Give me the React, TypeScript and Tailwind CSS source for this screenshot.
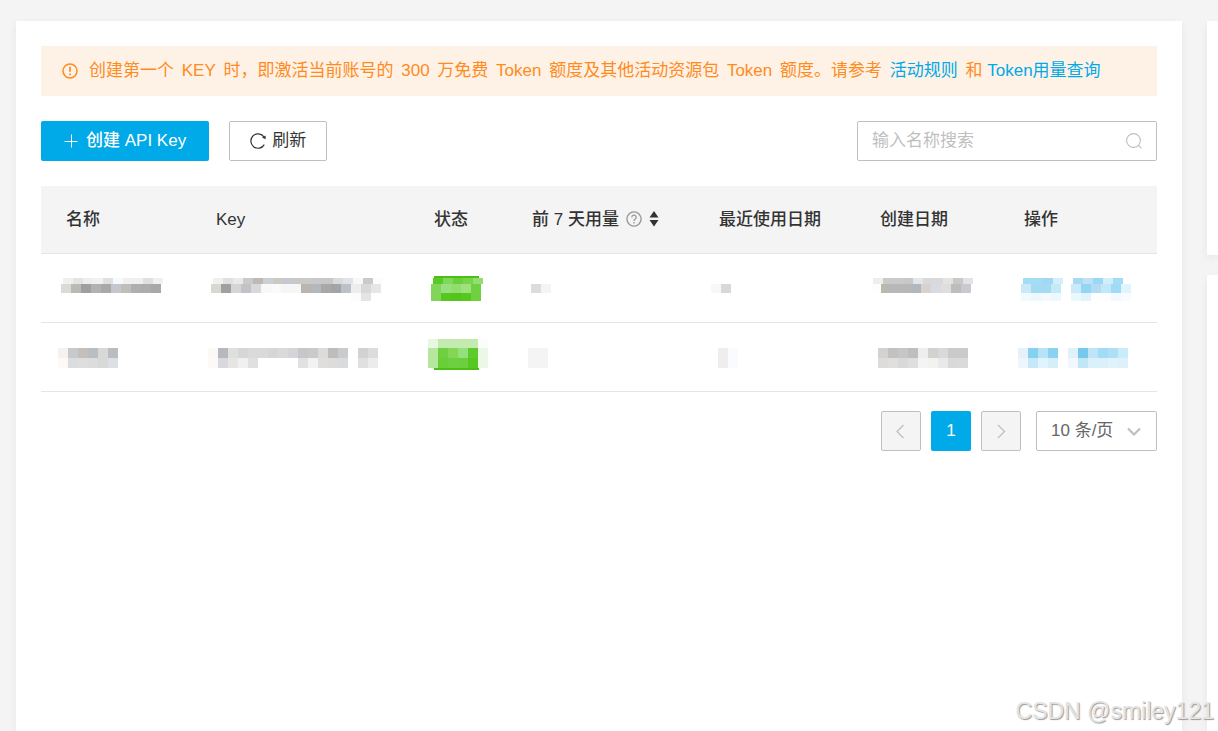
import { useState } from "react";

type Strip = { x: number; y: number; h: number; colors: string[] };

const columns = [
  { key: "name", title: "名称", width: "w-[150px]" },
  { key: "key", title: "Key", width: "w-[218px]" },
  { key: "status", title: "状态", width: "w-[98px]" },
  { key: "usage", title: "前 7 天用量", width: "w-[187px]" },
  { key: "lastUsed", title: "最近使用日期", width: "w-[161px]" },
  { key: "created", title: "创建日期", width: "w-[144px]" },
  { key: "actions", title: "操作", width: "w-auto" },
];

const strip = (x: number, y: number, h: number, colors: string): Strip => ({
  x,
  y,
  h,
  colors: colors.split(" "),
});

// every row holds one masked value per column
const rows: Strip[][][] = [
  [
    [
      strip(6, 10, 6, "f0f0ef e4e4e4 edeef0 f2f1ef e0e0e1 f6faff f0f0f0 f0f0f0 e0e0e0 f0f0f0"),
      strip(4, 16, 9, "dadada bcb8b4 9f9fa0 aeb3b4 a9a9a9 c4c8cc bfbebc aeafb2 acaeae a8a8a8"),
    ],
    [
      strip(6, 10, 6, "f0f0f0 e0e0e0 ebeae8 cacaca bcb9b7 cbd0d3 ccc8c4 c5c8d1 ccc8c6 cacaca c8c8c8 c8c8c8 d9dadc e1e4e7 f8f8f8 cacaca fcfcfc"),
      strip(4, 16, 9, "dad6d2 a0a0a0 d3d5d8 c2c3c6 d9d9d9 f8f8f8 fafafa f6f6f6 f6f6f4 b9b5af b5b8bb a8a8a8 a4a4a6 bbc1cb ededed d9d9dc e6e6e6"),
      strip(144, 25, 8, "fcfcfc e4e4e4"),
    ],
    [
      strip(9, 8, 2, "4bc013 4bc013 4bc013 4bc013"),
      strip(44, 8, 2, "4bc013"),
      strip(8, 10, 6, "57ca26 80d75a 6acf3c 77d44c 93dd73"),
      strip(6, 16, 9, "81d659 97e07f 92dd70 9fe17f 6fd040"),
      strip(6, 25, 8, "81d659 56c71d 52c51a 56c71d 6fd040"),
    ],
    [strip(8, 16, 9, "dddcda f3f4f6")],
    [strip(1, 16, 9, "f8f8f7 d6d8da")],
    [
      strip(2, 10, 6, "efeeec cacaca cacaca c8c8c8 e3e6e8 d9d9d9 d9d9d9 e6e4e2 c9c9c9 e1e3e6"),
      strip(0, 16, 9, "fefdfb bbb8b2 b5b9bd bbb7b5 b1b7ba d8d1d2 d6dce2 e0ddda bdbdbd c9cad0"),
    ],
    [
      strip(8, 10, 6, "a3dcf3 a3dcf3 a0d9f1 d6eefb"),
      strip(58, 10, 6, "a8d9f2 bde2f5 99d9f3 d2eefb a3dcf5"),
      strip(6, 16, 9, "c9e9f6 a3dbf3 a3dbf3 c2ebf7"),
      strip(56, 16, 9, "cbe9f8 93d6f2 b5daf5 bfe8f9 a0daf4 dff5fd"),
      strip(6, 25, 8, "f2fafe edf8fd f2fafe edf8fe"),
      strip(56, 25, 8, "eaf7fd e1f4fd fefefe fcfdfe f3f9fe f9fcff"),
    ],
  ],
  [
    [
      strip(1, 11, 10, "f7f2ee c8c9cb c3bfbb b9bec2 d8d8d8 b9bcc3"),
      strip(1, 21, 10, "fbfaf7 dbdcde dededc dcdcdc d8d8d8 dedfe3"),
    ],
    [
      strip(1, 11, 10, "fcf8f4 b6b8bd dee0de d6d6d6 dadada dbdad8 d5d6d9 dcdad9 d3d5d8 c7c7c7 c9cbcb dbdbdb bebdbc cacbcd"),
      strip(151, 11, 10, "d2d2d2 dcdcdc"),
      strip(1, 21, 10, "fbfaf9 d7d9dc e6e5e3 f0f0f0 e0e0e0"),
      strip(91, 21, 10, "e1e1e1 f2f2f2 dfdedc dddcdc dadbdc"),
      strip(151, 21, 10, "e0e0e0 ececec"),
    ],
    [
      strip(3, 2, 9, "e7f7e0 c4ebaf c4ebaf c4ebaf c4ebaf fafdf9"),
      strip(3, 11, 10, "b7e79f 6ed040 84d755 95df7d 5fca2c ebf8e6"),
      strip(3, 21, 10, "b7e79f 69cf37 6ed040 6ccf3e 57c81f ebf8e6"),
      strip(9, 31, 2, "4bc013 4bc013 4bc013 4bc013"),
      strip(44, 31, 2, "4bc013"),
    ],
    [strip(5, 11, 20, "f4f4f4 f4f4f4")],
    [strip(8, 11, 20, "efeeec fafbfe")],
    [
      strip(7, 11, 10, "d5d1ce c3c1bf c5c6ca bebebe eeeeee d2d2d0 d9d9dc cacaca cacaca"),
      strip(7, 21, 10, "dddcda dfdfdf d9d9d9 dedede f3f5f5 f2f2f0 e9e9e9 d9d9d9 dadada"),
    ],
    [
      strip(13, 2, 9, "fafdff"),
      strip(63, 2, 9, "fcfdff"),
      strip(3, 11, 10, "e6f2fb 87d1f0 b6e3f5 88d3f1"),
      strip(53, 11, 10, "e1f1fb 78c8ee bee5f6 a2dbf5 aedff5 c8ecf9"),
      strip(3, 21, 10, "ecf6fc c6e8f9 e0f4fd d5eefa"),
      strip(53, 21, 10, "f0f8fd c1e6f6 daf0fb daf0fb e0f2fb def1fb"),
    ],
  ],
];

const Mosaic = ({ strips }: { strips: Strip[] }) => (
  <svg className="block h-10 w-full overflow-visible" shapeRendering="crispEdges" aria-hidden="true">
    {strips.map((s, i) =>
      s.colors.map((color, j) => (
        <rect key={`${i}-${j}`} x={s.x + j * 10} y={s.y} width={10} height={s.h} fill={`#${color}`} />
      ))
    )}
  </svg>
);

const WarningIcon = () => (
  <svg width="16" height="16" viewBox="0 0 16 16" fill="none" stroke="currentColor" className="shrink-0">
    <circle cx="8" cy="8" r="7" strokeWidth="1.5" />
    <path d="M8 3.8v5M8 10.4v1.8" strokeWidth="1.7" />
  </svg>
);

const PlusIcon = () => (
  <svg width="14" height="14" viewBox="0 0 14 14" fill="none" stroke="currentColor">
    <path d="M0.5 7.5h13M7.5 0.5v13" />
  </svg>
);

const RefreshIcon = () => (
  <svg width="16" height="16" viewBox="0 0 16 16" fill="none" stroke="currentColor">
    <path d="M14.3 11.6A7.2 7.2 0 1 1 14 4" strokeWidth="1.2" />
    <path d="M15.6 2.6v3.6l-3.6-1.6z" fill="currentColor" stroke="none" />
  </svg>
);

const SearchIcon = () => (
  <svg width="16" height="16" viewBox="0 0 16 16" fill="none" stroke="currentColor">
    <circle cx="7.5" cy="7.5" r="6.9" strokeWidth="1.1" />
    <path d="M12.2 12.2l3.2 3.2" strokeWidth="1.2" />
  </svg>
);

const HelpIcon = () => (
  <svg width="16" height="16" viewBox="0 0 16 16" fill="none" stroke="currentColor">
    <circle cx="8" cy="8" r="7.1" strokeWidth="1.4" />
    <path d="M5.8 6.4a2.2 2.2 0 1 1 3.3 1.8c-.8.5-1.1.8-1.1 1.8M8 11v1.5" strokeWidth="1.3" />
  </svg>
);

const SortIcon = () => (
  <svg width="10" height="16" viewBox="0 0 10 16" fill="currentColor">
    <path d="M5 0l4.5 6.5h-9zM5 15.5l4.5-6.5h-9z" />
  </svg>
);

const ArrowIcon = ({ d }: { d: string }) => (
  <svg width="16" height="16" viewBox="0 0 16 16" fill="none" stroke="currentColor">
    <path d={d} strokeWidth="1.3" />
  </svg>
);

const App = () => {
  const [search, setSearch] = useState("");
  const [pageSize, setPageSize] = useState("10");

  return (
    <div className="flex min-h-screen gap-[25px] overflow-hidden bg-[#f4f4f4] pl-4 pt-[21px] font-['Liberation_Sans','Noto_Sans_CJK_SC',sans-serif] text-[#333]">
      <main className="min-w-0 flex-1 bg-white p-[25px] shadow-[0_3px_8px_rgba(0,0,0,0.06)]">
        <div className="flex h-[50px] items-center gap-[11px] bg-[#fef2e6] pl-[21px] text-[17px] text-[#ff8b1e]">
          <WarningIcon />
          <p className="whitespace-nowrap">
            创建第一个 <span className="mx-[3px]">KEY</span> 时，即激活当前账号的{" "}
            <span className="mx-[3px]">300</span> 万免费 <span className="mx-[3px]">Token</span>{" "}
            额度及其他活动资源包 <span className="mx-[3px]">Token</span> 额度。请参考{" "}
            <a href="#rules" className="mx-[3px] text-[#00a9e8]">活动规则</a> 和{" "}
            <a href="#usage" className="text-[#00a9e8]">Token用量查询</a>
          </p>
        </div>

        <div className="mt-[25px] flex items-center gap-5 text-[17px]">
          <button className="flex h-10 items-center gap-2 whitespace-nowrap rounded-xs bg-[#00a9e8] px-[23px] font-medium text-white">
            <PlusIcon />
            创建 API Key
          </button>
          <button className="flex h-10 items-center gap-1.5 whitespace-nowrap rounded-xs border border-[#bfbfbf] px-5">
            <RefreshIcon />
            刷新
          </button>
          <div className="ml-auto flex h-10 w-[300px] items-center rounded-xs border border-[#bfbfbf] px-3.5 text-[#bfbfbf]">
            <input
              aria-label="输入名称搜索"
              placeholder="输入名称搜索"
              value={search}
              onChange={(e) => setSearch(e.target.value)}
              className="min-w-0 flex-1 text-[#333] outline-none placeholder:text-[#bfbfbf]"
            />
            <SearchIcon />
          </div>
        </div>

        <table className="mt-[25px] w-full table-fixed border-collapse text-left">
          <colgroup>
            {columns.map((col) => (
              <col key={col.key} className={col.width} />
            ))}
          </colgroup>
          <thead>
            <tr className="h-[67px] border-b border-[#e5e5e5] bg-[#f4f4f4]">
              {columns.map((col) => (
                <th key={col.key} className="whitespace-nowrap pl-[25px] text-[17px] font-medium">
                  {col.key === "usage" ? (
                    <span className="flex items-center gap-[7px]">
                      {col.title}
                      <button aria-label="help" className="text-[#999]">
                        <HelpIcon />
                      </button>
                      <button aria-label="sort">
                        <SortIcon />
                      </button>
                    </span>
                  ) : (
                    col.title
                  )}
                </th>
              ))}
            </tr>
          </thead>
          <tbody>
            {rows.map((cells, index) => (
              <tr key={index} className="border-b border-[#e5e5e5]">
                {cells.map((strips, idx) => (
                  <td key={idx} className="px-4 py-3.5">
                    <Mosaic strips={strips} />
                  </td>
                ))}
              </tr>
            ))}
          </tbody>
        </table>

        <nav className="mt-[19px] flex justify-end gap-2.5 text-[17px]">
          <button disabled aria-label="prev" className="flex size-10 items-center justify-center rounded-xs border border-[#bfbfbf] bg-[#f4f4f4] text-[#bfbfbf]">
            <ArrowIcon d="M10.5 2L4 8.5l6.5 6.5" />
          </button>
          <button className="size-10 rounded-xs bg-[#00a9e8] font-medium text-white">1</button>
          <button disabled aria-label="next" className="flex size-10 items-center justify-center rounded-xs border border-[#bfbfbf] bg-[#f4f4f4] text-[#bfbfbf]">
            <ArrowIcon d="M5 2l6.5 6.5L5 15" />
          </button>
          <div className="relative ml-[5px]">
            <select
              aria-label="page size"
              value={pageSize}
              onChange={(e) => setPageSize(e.target.value)}
              className="h-10 w-[121px] appearance-none rounded-xs border border-[#bfbfbf] bg-white pl-3.5 text-[#666]"
            >
              <option value="10">10 条/页</option>
              <option value="20">20 条/页</option>
              <option value="50">50 条/页</option>
            </select>
            <svg
              className="pointer-events-none absolute right-4 top-4 text-[#bfbfbf]"
              width="14"
              height="10"
              viewBox="0 0 14 10"
              fill="none"
              stroke="currentColor"
              strokeWidth="2.2"
            >
              <path d="M1 1.5l6 6 6-6" />
            </svg>
          </div>
        </nav>
      </main>

      <aside className="flex w-[11px] shrink-0 flex-col gap-5">
        <div className="h-[234px] bg-white shadow-[0_3px_8px_rgba(0,0,0,0.06)]" />
        <div className="flex-1 bg-white shadow-[0_3px_8px_rgba(0,0,0,0.06)]" />
      </aside>

      <span className="absolute bottom-1 right-1 text-[23px] leading-8 text-[#e4e4e4] [text-shadow:1px_1px_1px_#999]">
        CSDN @smiley121
      </span>
    </div>
  );
};

export default App;
